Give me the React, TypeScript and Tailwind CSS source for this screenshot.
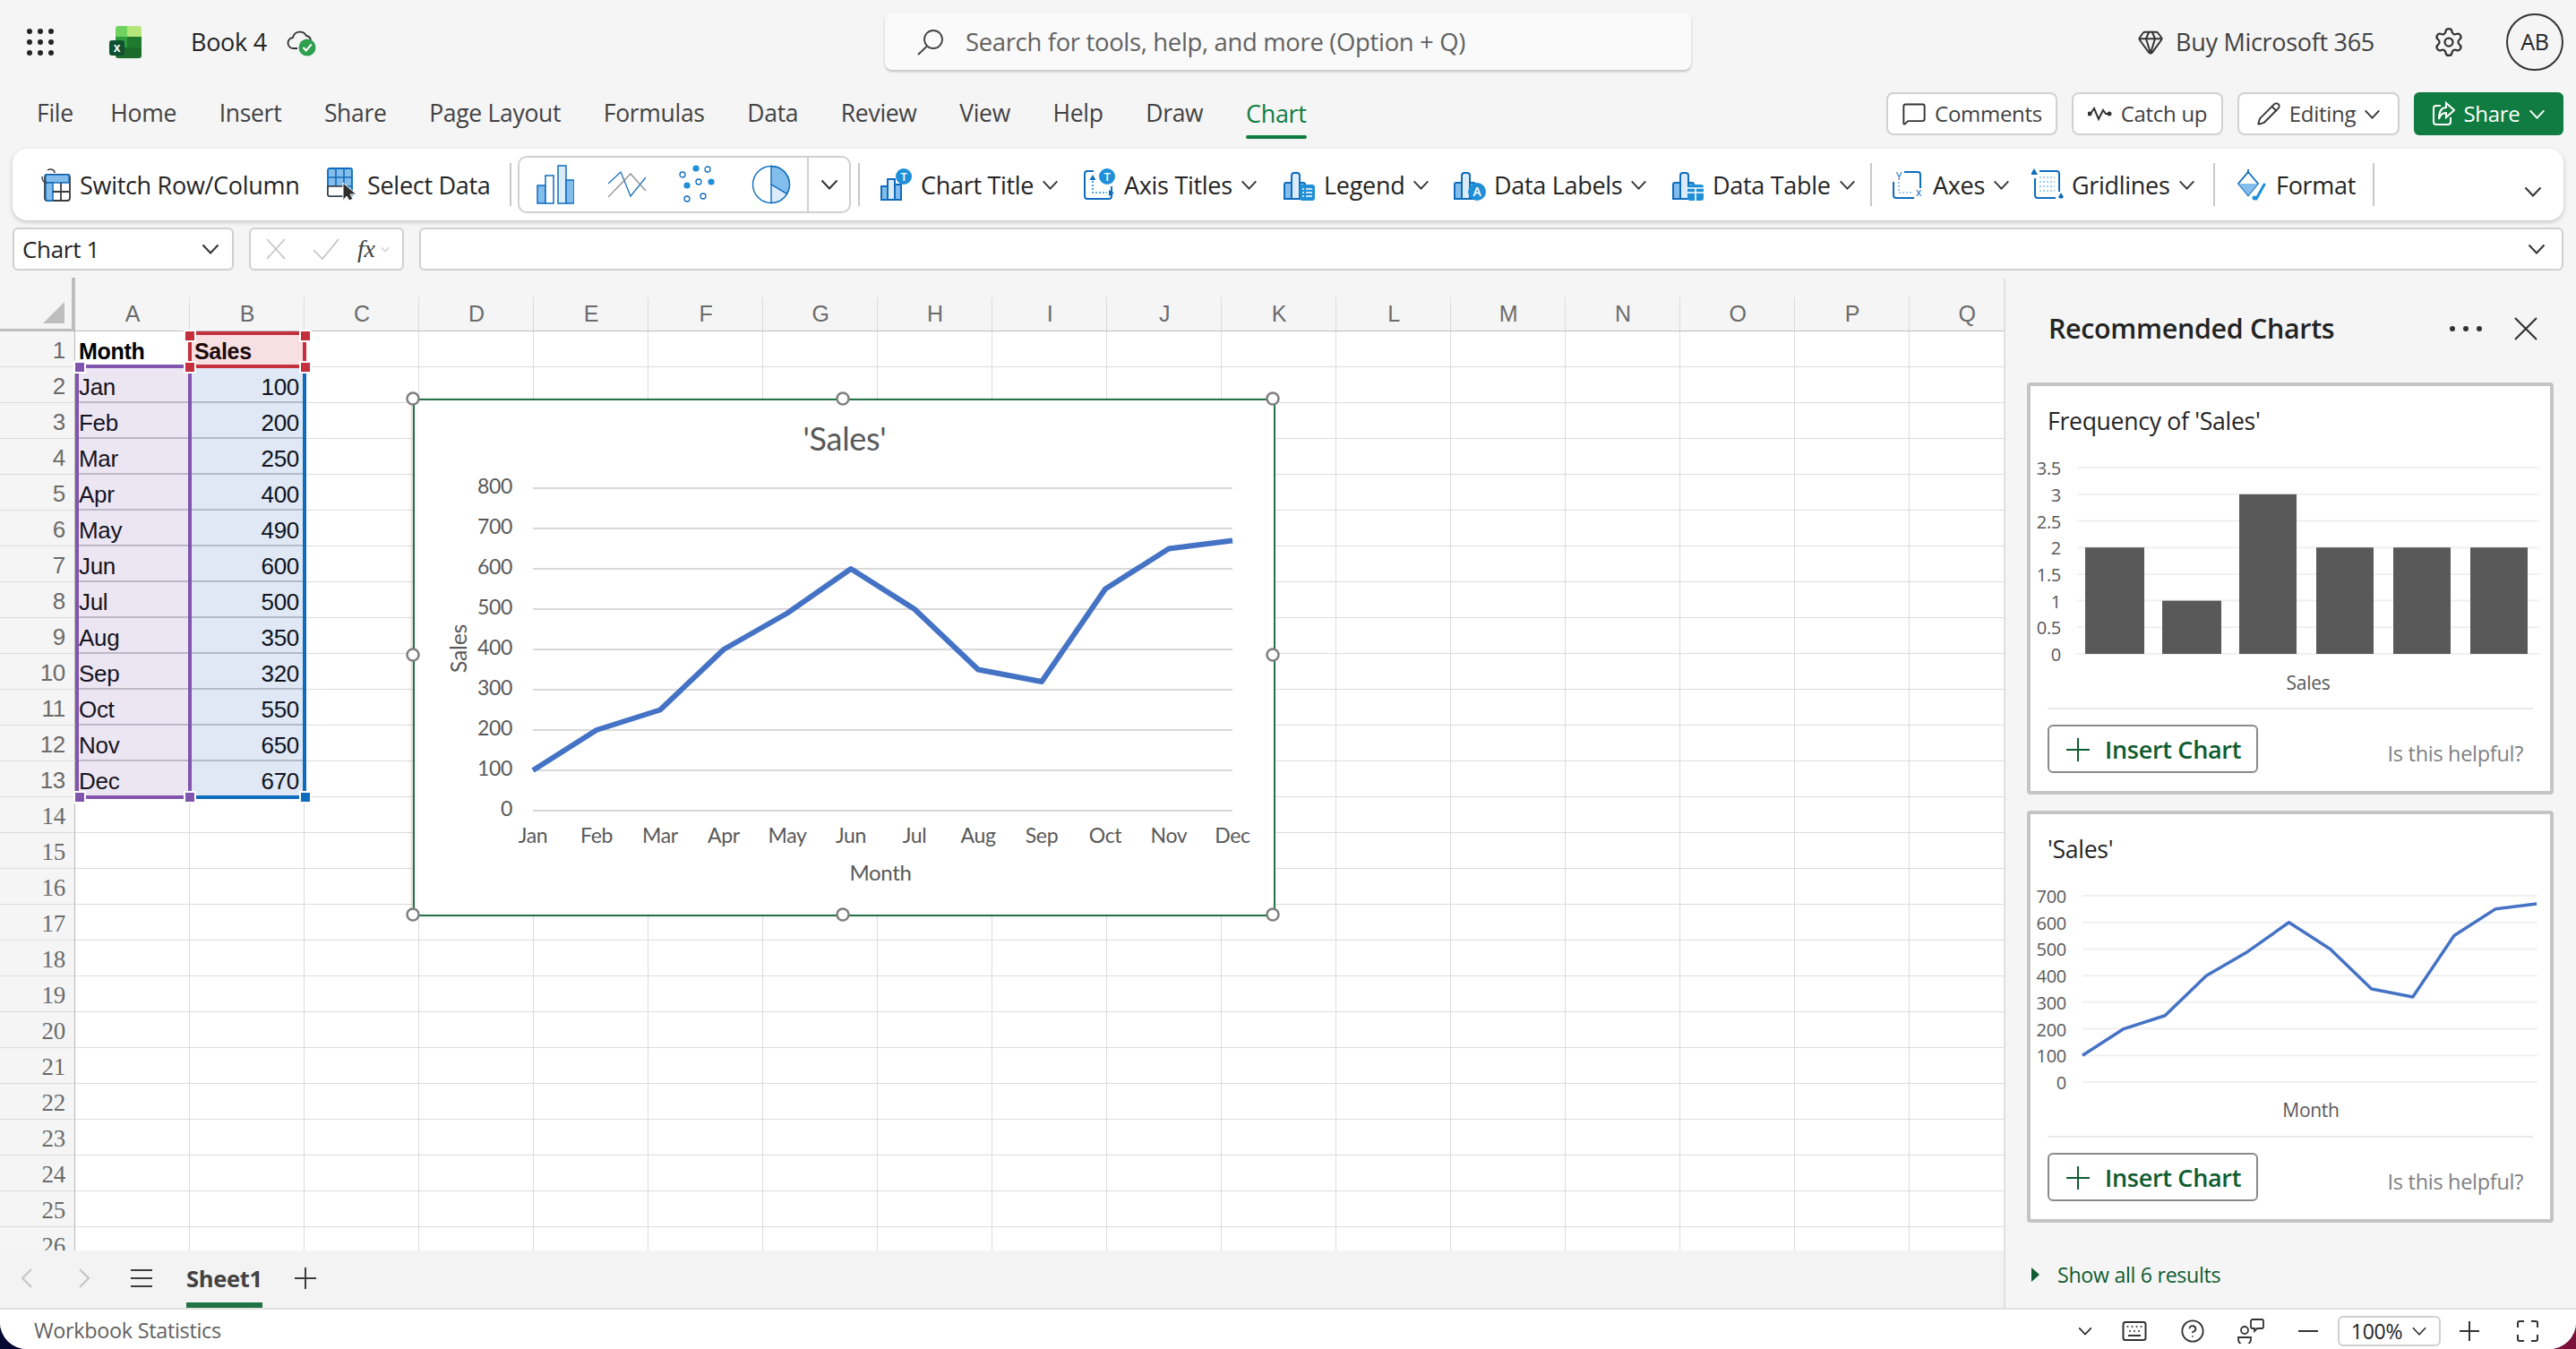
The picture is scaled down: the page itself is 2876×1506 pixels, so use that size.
import { Settings, Gem, Keyboard, CircleHelp, Pencil, MessageSquare } from 'lucide-react'

const months = ['Jan', 'Feb', 'Mar', 'Apr', 'May', 'Jun', 'Jul', 'Aug', 'Sep', 'Oct', 'Nov', 'Dec']
const sales = [100, 200, 250, 400, 490, 600, 500, 350, 320, 550, 650, 670]
const columns = 'ABCDEFGHIJKLMNOPQ'.split('')
const rows = Array.from({ length: 26 }, (_, i) => i + 1)

const DARK = '#0f6cbd'
const MID = '#83bdeb'
const LIGHT = '#dcebf9'
const BADGE = '#1f8fd8'
const GREEN = '#0e5c2f'

function Chev({ className = 'w-[20px] h-[12px]', color = '#333333' }: { className?: string; color?: string }) {
    return (
        <svg viewBox="0 0 20 12" className={className} fill="none">
            <path d="M1.5 1.5 L10 10.5 L18.5 1.5" stroke={color} strokeWidth="2" />
        </svg>
    )
}

function Bars() {
    return (
        <g>
            <path d="M1 34 V18 a2 2 0 0 1 2-2 h6 V34 Z" fill={MID} stroke={DARK} strokeWidth="2" />
            <path d="M9 34 V8 a3 3 0 0 1 3-3 h3 a3 3 0 0 1 3 3 V34 Z" fill={LIGHT} stroke={DARK} strokeWidth="2" />
            <path d="M18 34 V16 h4 a2 2 0 0 1 2 2 V34 Z" fill={MID} stroke={DARK} strokeWidth="2" />
        </g>
    )
}

function ChartTitleIcon() {
    return (
        <svg viewBox="0 0 36 36" className="w-[36px] h-[36px]">
            <path d="M1 35 V20 h7 V35 Z" fill={MID} stroke={DARK} strokeWidth="2" />
            <path d="M8 35 V12 h8 V35 Z" fill={LIGHT} stroke={DARK} strokeWidth="2" />
            <path d="M16 35 V18 h7 V35 Z" fill={MID} stroke={DARK} strokeWidth="2" />
            <circle cx="26" cy="9" r="9" fill={BADGE} />
            <text x="26" y="14" textAnchor="middle" fontSize="13" fontWeight="600" fill="#ffffff">T</text>
        </svg>
    )
}

function LegendIcon() {
    return (
        <svg viewBox="0 0 36 36" className="w-[36px] h-[36px]">
            <Bars />
            <rect x="18" y="18" width="17" height="18" rx="3" fill={BADGE} />
            <path d="M21 23 h2 M25 23 h7 M21 27 h2 M25 27 h7 M21 31 h2 M25 31 h7" stroke="#ffffff" strokeWidth="1.6" />
        </svg>
    )
}

function DataLabelsIcon() {
    return (
        <svg viewBox="0 0 36 36" className="w-[36px] h-[36px]">
            <Bars />
            <circle cx="26" cy="26" r="10" fill={BADGE} />
            <text x="26" y="31" textAnchor="middle" fontSize="14" fontWeight="600" fill="#ffffff">A</text>
        </svg>
    )
}

function DataTableIcon() {
    return (
        <svg viewBox="0 0 36 36" className="w-[36px] h-[36px]">
            <Bars />
            <rect x="17" y="18" width="18" height="18" rx="3" fill={BADGE} />
            <path d="M26 22 V36 M17 27 H35 M17 22 H35" stroke="#ffffff" strokeWidth="1.6" />
        </svg>
    )
}

function AxisTitlesIcon() {
    return (
        <svg viewBox="0 0 36 36" className="w-[36px] h-[36px]" fill="none">
            <path d="M11 3 H4 a3 3 0 0 0 -3 3 V31 a3 3 0 0 0 3 3 H28 a3 3 0 0 0 3-3 V20" stroke={DARK} strokeWidth="2" />
            <path d="M10 14 V27 H26" stroke={BADGE} strokeWidth="1.6" strokeDasharray="2 2" />
            <path d="M10 7 l3.5 6 h-7 Z" fill={DARK} />
            <path d="M28 24 l6 3.5 -6 3.5 Z" fill={DARK} />
            <circle cx="26" cy="9" r="9" fill={BADGE} />
            <text x="26" y="14" textAnchor="middle" fontSize="13" fontWeight="600" fill="#ffffff">T</text>
        </svg>
    )
}

function AxesIcon() {
    return (
        <svg viewBox="0 0 36 36" className="w-[36px] h-[36px]" fill="none">
            <path d="M13 4 H28 a3 3 0 0 1 3 3 V22 M24 33 H4 a3 3 0 0 1 -3-3 V15" stroke={DARK} strokeWidth="2" />
            <path d="M7 15 V27 H23" stroke={MID} strokeWidth="1.6" strokeDasharray="2 2" />
            <text x="7" y="13" textAnchor="middle" fontSize="12" fill={DARK}>Y</text>
            <text x="29" y="31" textAnchor="middle" fontSize="12" fill={DARK}>x</text>
        </svg>
    )
}

function GridlinesIcon() {
    return (
        <svg viewBox="0 0 36 36" className="w-[36px] h-[36px]" fill="none">
            <path d="M9 3 H28 a3 3 0 0 1 3 3 V26 M27 33 H7 a3 3 0 0 1 -3-3 V11" stroke={DARK} strokeWidth="2" />
            <path d="M9 10 H26 M9 15 H26 M9 20 H26 M9 25 H26" stroke={MID} strokeWidth="1.6" strokeDasharray="2 2" />
            <path d="M3 0 l4 7 h-8 Z M33 27 l3 5 a3.5 3.5 0 0 1 -6 0 Z" fill={DARK} />
        </svg>
    )
}

function FormatIcon() {
    return (
        <svg viewBox="0 0 36 36" className="w-[36px] h-[36px]" fill="none">
            <path d="M14 1 V6 M14 4 L25 17 L14 30 L3 17 Z" stroke={DARK} strokeWidth="1.8" />
            <path d="M3 17 H25 L14 30 Z" fill={MID} />
            <path d="M32 18 L23 34" stroke={BADGE} strokeWidth="3" strokeLinecap="round" />
            <circle cx="21" cy="33" r="2.5" fill={BADGE} />
        </svg>
    )
}

function SwitchIcon() {
    return (
        <svg viewBox="0 0 34 38" className="w-[34px] h-[38px]" fill="none">
            <rect x="5" y="8" width="28" height="29" rx="3" fill="#ffffff" stroke="#3a3a3a" strokeWidth="1.8" />
            <path d="M6 8 H32 V17 H6 Z" fill={MID} stroke={DARK} strokeWidth="1.5" />
            <path d="M6 17 H14 V37 H8 a2 2 0 0 1 -2-2 Z" fill={MID} stroke={DARK} strokeWidth="1.5" />
            <path d="M14 27 H32 M23 17 V37" stroke="#3a3a3a" strokeWidth="1.8" />
            <path d="M16 6 C16 2 11 1 8 3 M2 10 C2 14 4 17 7 17" stroke="#3a3a3a" strokeWidth="1.5" />
        </svg>
    )
}

function SelectDataIcon() {
    return (
        <svg viewBox="0 0 36 38" className="w-[36px] h-[38px]" fill="none">
            <rect x="1" y="1" width="27" height="31" rx="2" fill={MID} stroke={DARK} strokeWidth="1.8" />
            <path d="M10 1 V32 M19 1 V32 M1 11 H28 M1 21 H28" stroke={DARK} strokeWidth="1.6" />
            <path d="M1 21 H19 V32 H3 a2 2 0 0 1 -2-2 Z" fill="#ffffff" stroke="#3a3a3a" strokeWidth="1.6" />
            <path d="M18 17 V37 L22 32 L25 37 L29 35 L26 30 H33 Z" fill="#2f2f2f" stroke="#ffffff" strokeWidth="1" />
        </svg>
    )
}

function ColumnChartIcon() {
    return (
        <svg viewBox="0 0 42 44" className="w-[42px] h-[44px]">
            <rect x="1" y="23" width="9" height="20" fill={MID} stroke={DARK} strokeWidth="1.5" />
            <rect x="10" y="12" width="9" height="31" fill="#ffffff" stroke={DARK} strokeWidth="1.5" />
            <rect x="24" y="1" width="9" height="42" fill={LIGHT} stroke={DARK} strokeWidth="1.5" />
            <rect x="33" y="17" width="9" height="26" fill={MID} stroke={DARK} strokeWidth="1.5" />
        </svg>
    )
}

function LineChartIcon() {
    return (
        <svg viewBox="0 0 42 30" className="w-[42px] h-[30px]" fill="none">
            <path d="M0 14 L14 1 L25 28 L42 7" stroke={DARK} strokeWidth="1.2" />
            <path d="M0 29 L25 3 L42 22" stroke="#8a8a8a" strokeWidth="1.2" />
        </svg>
    )
}

function ScatterIcon() {
    const open = [[7, 11], [35, 5], [25, 19], [12, 38], [30, 35]]
    const solid = [[22, 4], [12, 23], [39, 19]]
    return (
        <svg viewBox="0 0 46 44" className="w-[46px] h-[44px]" fill="none">
            {open.map(([x, y]) => (
                <circle key={`${x}-${y}`} cx={x} cy={y} r="3" stroke={DARK} strokeWidth="1.3" fill="#ffffff" />
            ))}
            {solid.map(([x, y]) => (
                <circle key={`${x}-${y}`} cx={x} cy={y} r="3.6" fill={BADGE} />
            ))}
        </svg>
    )
}

function PieIcon() {
    return (
        <svg viewBox="0 0 44 44" className="w-[44px] h-[44px]" fill="none">
            <circle cx="22" cy="22" r="20.5" fill="#ffffff" stroke={DARK} strokeWidth="1.4" />
            <path d="M22 1.5 A20.5 20.5 0 0 1 39.5 32.5 L22 22 Z" fill={MID} stroke={DARK} strokeWidth="1.4" />
            <path d="M22 22 L39.5 32.5 A20.5 20.5 0 0 1 22 42.5 Z" fill={LIGHT} stroke={DARK} strokeWidth="1.4" />
        </svg>
    )
}

function ExcelLogo() {
    return (
        <svg viewBox="0 0 36 36" className="w-[36px] h-[36px]">
            <path d="M7 3 a3 3 0 0 1 3-3 h10 V12 H7 Z" fill="#6fd35f" />
            <path d="M20 0 h13 a3 3 0 0 1 3 3 V12 H20 Z" fill="#b5e77a" />
            <path d="M7 12 H36 V24 H7 Z" fill="#2f9c3f" />
            <path d="M20 12 H36 V24 H20 Z" fill="#1f7a30" />
            <path d="M7 24 H36 V33 a3 3 0 0 1 -3 3 H10 a3 3 0 0 1 -3-3 Z" fill="#1d6b2b" />
            <rect x="0" y="16" width="17" height="17" rx="3" fill="#0e5233" />
            <text x="8.5" y="29" textAnchor="middle" fontSize="14" fontWeight="700" fontFamily="Liberation Sans" fill="#ffffff">x</text>
        </svg>
    )
}

function ShareIcon() {
    return (
        <svg viewBox="0 0 26 28" className="w-[26px] h-[28px]" fill="none" stroke="#ffffff" strokeWidth="2">
            <path d="M10 5 H5 a3 3 0 0 0 -3 3 V23 a3 3 0 0 0 3 3 H18 a3 3 0 0 0 3-3 V18" />
            <path d="M16 2 L25 10 L16 18 V13 C11 13 9 16 8 20 C8 13 10 7 16 7 Z" />
        </svg>
    )
}

function Divider({ className }: { className: string }) {
    return <div className={`shrink-0 w-[2px] h-[48px] bg-[#c8c8c8] ${className}`} />
}

function RibbonButton({ icon, label, width, arrow = true }: { icon: React.ReactNode; label: string; width: string; arrow?: boolean }) {
    return (
        <div className={`flex items-center shrink-0 ${width}`}>
            <span className="flex w-[36px] justify-center">{icon}</span>
            <span className="ml-[9px] pt-[2px] text-[#242424]">{label}</span>
            {arrow && <Chev className="ml-[9px] w-[19px] h-[11px]" />}
        </div>
    )
}

function TopButton({ icon, label, width, arrow }: { icon: React.ReactNode; label: string; width: string; arrow?: boolean }) {
    return (
        <div className={`flex items-center justify-center h-[48px] gap-[9px] bg-white rounded-[8px] border-2 border-[#d1d1d1] text-[#424242] text-[24px] ${width}`}>
            {icon}
            <span>{label}</span>
            {arrow && <Chev className="w-[19px] h-[11px]" />}
        </div>
    )
}

function MainChart() {
    const x = (i: number) => 595 + i * 71
    const y = (v: number) => 905 - v * 0.45
    const points = sales.map((v, i) => `${x(i)},${y(v)}`).join(' ')
    const handles = [[461, 445], [941, 445], [1421, 445], [461, 731], [1421, 731], [461, 1021], [941, 1021], [1421, 1021]]
    return (
        <div className="absolute left-[461px] top-[135px] w-[963px] h-[578px] bg-white border-2 border-[#217346] shadow-[-2px_0_3px_rgba(0,0,0,0.15)]">
            <svg viewBox="463 447 959 574" className="absolute left-0 top-0 w-[959px] h-[574px] overflow-visible font-['Lato',sans-serif]">
                <text x="943" y="503" textAnchor="middle" fontSize="36" fill="#595959">'Sales'</text>
                {[0, 100, 200, 300, 400, 500, 600, 700, 800].map((v) => (
                    <g key={v}>
                        <line x1="595" x2="1376" y1={y(v)} y2={y(v)} stroke="#d9d9d9" strokeWidth="2" />
                        <text x="572" y={y(v) + 6} textAnchor="end" fontSize="23" fill="#595959">{v}</text>
                    </g>
                ))}
                <polyline points={points} fill="none" stroke="#4472c4" strokeWidth="6" strokeLinejoin="round" />
                {months.map((m, i) => (
                    <text key={m} x={x(i)} y="941" textAnchor="middle" fontSize="23" fill="#595959">{m}</text>
                ))}
                <text x="983" y="983" textAnchor="middle" fontSize="24" fill="#595959">Month</text>
                <text transform="translate(521 724) rotate(-90)" textAnchor="middle" fontSize="25" fill="#595959">Sales</text>
                {handles.map(([hx, hy]) => (
                    <circle key={`${hx}-${hy}`} cx={hx} cy={hy} r="6.5" fill="#ffffff" stroke="#7f7f7f" strokeWidth="2.5" />
                ))}
            </svg>
        </div>
    )
}

function RangeHandle({ className }: { className: string }) {
    return <div className={`absolute w-[10px] h-[10px] outline-2 outline-white ${className}`} />
}

function SheetGrid() {
    return (
        <div className="relative flex-1 overflow-hidden bg-white font-['Liberation_Sans',sans-serif]">
            <div className="flex h-[60px] bg-[#f5f5f5] border-b border-[#bdbdbd]">
                <div className="flex justify-end items-end shrink-0 w-[84px] pr-[8px] pb-[6px] border-r-4 border-b-2 border-[#bdbdbd]">
                    <svg viewBox="0 0 24 24" className="w-[24px] h-[24px]"><polygon points="24,0 24,24 0,24" fill="#bdbdbd" /></svg>
                </div>
                {columns.map((c) => (
                    <div key={c} className="relative shrink-0 flex items-end justify-center w-[128px] text-[25px] text-[#6b6b6b]">
                        {c}
                        <div className="absolute right-0 top-[22px] bottom-0 w-px bg-[#dcdcdc]" />
                    </div>
                ))}
            </div>
            {rows.map((r) => (
                <div key={r} className="flex h-[40px]">
                    <div className={`shrink-0 flex items-center justify-end w-[84px] pr-[10px] pt-[4px] bg-[#f5f5f5] border-b border-r border-b-[#dcdcdc] border-r-[#b8b8b8] text-[#6b6b6b] ${r > 13 ? "font-['Liberation_Serif',serif] text-[27px]" : 'text-[26px]'}`}>
                        {r}
                    </div>
                    {columns.map((c) => {
                        const month = r >= 2 && r <= 13 ? months[r - 2] : null
                        if (c === 'A' && r === 1) {
                            return <div key={c} className="shrink-0 flex items-center w-[128px] pl-[4px] pt-[6px] border-r border-b border-[#dcdcdc] font-bold text-[25px] text-black">Month</div>
                        }
                        if (c === 'B' && r === 1) {
                            return <div key={c} className="shrink-0 flex items-center w-[128px] pl-[5px] pt-[6px] bg-[#f8e0e2] font-bold text-[25px] text-[#1c0a0c]">Sales</div>
                        }
                        if (c === 'A' && month) {
                            return <div key={c} className="shrink-0 flex items-center w-[128px] pl-[4px] pt-[6px] bg-[#ece6f2] border-b-2 border-[#bcb8c8] text-[26px] text-[#161320]">{month}</div>
                        }
                        if (c === 'B' && month) {
                            return <div key={c} className="shrink-0 flex items-center justify-end w-[128px] pr-[6px] pt-[6px] bg-[#dfe8f4] border-b-2 border-[#b4bbc8] text-[26px] text-[#10131c]">{sales[r - 2]}</div>
                        }
                        return <div key={c} className="shrink-0 w-[128px] border-r border-b border-[#dcdcdc]" />
                    })}
                </div>
            ))}

            <div className="absolute left-[84px] top-[97px] w-[130px] h-[485px] border-4 border-[#7f55ad]" />
            <div className="absolute left-[214px] top-[106px] w-[128px] h-[476px] border-r-4 border-b-4 border-[#0f6cbd]" />
            <div className="absolute left-[210px] top-[60px] w-[132px] h-[41px] border-4 border-[#c4313c]" />
            <RangeHandle className="left-[207px] top-[60px] h-[5px] bg-[#c4313c]" />
            <RangeHandle className="left-[336px] top-[60px] h-[5px] bg-[#c4313c]" />
            <RangeHandle className="left-[207px] top-[95px] bg-[#c4313c]" />
            <RangeHandle className="left-[336px] top-[95px] bg-[#c4313c]" />
            <RangeHandle className="left-[84px] top-[95px] w-[5px] bg-[#7f55ad]" />
            <RangeHandle className="left-[84px] top-[575px] w-[5px] bg-[#7f55ad]" />
            <RangeHandle className="left-[207px] top-[575px] bg-[#7f55ad]" />
            <RangeHandle className="left-[336px] top-[575px] bg-[#0f6cbd]" />
            <MainChart />
        </div>
    )
}

function CardFooter() {
    return (
        <>
            <div className="h-[2px] mx-[19px] mt-[10px] bg-[#e8e8e8]" />
            <div className="flex items-end justify-between pl-[19px] pr-[30px] mt-[17px]">
                <div className="flex items-center h-[54px] w-[235px] pl-[19px] pt-[2px] border-2 border-[#8a8a8a] rounded-[6px]">
                    <svg viewBox="0 0 26 26" className="w-[26px] h-[26px]"><path d="M13 0 V26 M0 13 H26" stroke={GREEN} strokeWidth="2" /></svg>
                    <span className="ml-[17px] font-semibold text-[27px] text-[#0e5c2f]">Insert Chart</span>
                </div>
                <span className="pb-[4px] text-[23.5px] text-[#808080]">Is this helpful?</span>
            </div>
        </>
    )
}

function FrequencyCard() {
    const y = (v: number) => 730 - v * 59.4
    const bars = [
        { x: 2328, w: 66, v: 2 },
        { x: 2414, w: 66, v: 1 },
        { x: 2500, w: 64, v: 3 },
        { x: 2586, w: 64, v: 2 },
        { x: 2672, w: 64, v: 2 },
        { x: 2758, w: 64, v: 2 },
    ]
    return (
        <div className="w-[588px] h-[460px] bg-white border-4 border-[#c4c4c4] rounded-[4px]">
            <div className="h-[64px] pl-[19px] pt-[23px] text-[26.6px] leading-[32px] text-[#242424]">Frequency of 'Sales'</div>
            <svg viewBox="2267 495 580 285" className="block w-[580px] h-[285px]">
                {[0, 0.5, 1, 1.5, 2, 2.5, 3, 3.5].map((v) => (
                    <g key={v}>
                        <line x1="2319" x2="2835" y1={y(v)} y2={y(v)} stroke="#f0f0f0" strokeWidth="2" />
                        <text x="2301" y={y(v) + 8} textAnchor="end" fontSize="20" fill="#595959">{v}</text>
                    </g>
                ))}
                {bars.map((b) => (
                    <rect key={b.x} x={b.x} y={y(b.v)} width={b.w} height={b.v * 59.4} fill="#595959" />
                ))}
                <text x="2577" y="770" textAnchor="middle" fontSize="21" fill="#595959">Sales</text>
            </svg>
            <CardFooter />
        </div>
    )
}

function SalesCard() {
    const x = (i: number) => 2325 + i * 46.1
    const y = (v: number) => 1208 - v * (208 / 700)
    const points = sales.map((v, i) => `${x(i)},${y(v)}`).join(' ')
    return (
        <div className="w-[588px] h-[460px] mt-[18px] bg-white border-4 border-[#c4c4c4] rounded-[4px]">
            <div className="h-[64px] pl-[19px] pt-[23px] text-[26.6px] leading-[32px] text-[#242424]">'Sales'</div>
            <svg viewBox="2267 973 580 285" className="block w-[580px] h-[285px]">
                {[0, 100, 200, 300, 400, 500, 600, 700].map((v) => (
                    <g key={v}>
                        <line x1="2325" x2="2833" y1={y(v)} y2={y(v)} stroke="#f0f0f0" strokeWidth="2" />
                        <text x="2307" y={y(v) + 8} textAnchor="end" fontSize="20" fill="#595959">{v}</text>
                    </g>
                ))}
                <polyline points={points} fill="none" stroke="#4472c4" strokeWidth="3.5" strokeLinejoin="round" />
                <text x="2580" y="1247" textAnchor="middle" fontSize="21" fill="#595959">Month</text>
            </svg>
            <CardFooter />
        </div>
    )
}

export default function App() {
    return (
        <div className="w-[2876px] h-[1506px] overflow-hidden bg-gradient-to-r from-[#070733] to-[#7a1038] font-['Open_Sans',sans-serif] tracking-[-0.3px]">
            <div className="flex flex-col h-[1506px] bg-[#f5f5f5] rounded-b-[30px] overflow-hidden">
                {/* title bar */}
                <div className="relative flex items-center shrink-0 h-[94px] pl-[30px] pr-[14px]">
                    <div className="grid grid-cols-3 gap-x-[6px] gap-y-[6px] w-[30px]">
                        {Array.from({ length: 9 }, (_, i) => (
                            <span key={i} className="w-[6px] h-[6px] rounded-full bg-[#242424]" />
                        ))}
                    </div>
                    <div className="ml-[62px]"><ExcelLogo /></div>
                    <span className="ml-[55px] text-[27px] text-[#242424]">Book 4</span>
                    <svg viewBox="0 0 34 34" className="ml-[22px] w-[34px] h-[34px]" fill="none">
                        <path d="M12 24 H8 a6 6 0 0 1 -1-12 a8 8 0 0 1 15-2 a6 6 0 0 1 5 5" stroke="#333333" strokeWidth="1.8" />
                        <circle cx="23" cy="23" r="9.5" fill="#2e9e4f" />
                        <path d="M18.5 23 l3.2 3.5 l6-7" stroke="#ffffff" strokeWidth="2" />
                    </svg>
                    <div className="absolute left-[988px] top-[14px] flex items-center w-[900px] h-[64px] pl-[36px] pt-[2px] bg-[#fafafa] rounded-[8px] shadow-[0_2px_3px_rgba(0,0,0,0.22)]">
                        <svg viewBox="0 0 30 30" className="w-[30px] h-[30px]" fill="none" stroke="#424242" strokeWidth="1.8">
                            <circle cx="18" cy="12" r="10" />
                            <path d="M11 19.5 L1 29" />
                        </svg>
                        <span className="ml-[24px] text-[27.4px] text-[#616161]">Search for tools, help, and more (Option + Q)</span>
                    </div>
                    <div className="ml-auto flex items-center">
                        <Gem size={30} strokeWidth={1.6} color="#333333" />
                        <span className="ml-[13px] text-[27px] text-[#424242]">Buy Microsoft 365</span>
                        <Settings size={36} strokeWidth={1.5} color="#333333" className="ml-[65px]" />
                        <div className="flex items-center justify-center ml-[46px] w-[64px] h-[64px] rounded-full border-2 border-[#333333] text-[25px] text-[#242424]">AB</div>
                    </div>
                </div>

                {/* tabs */}
                <div className="relative flex items-center shrink-0 h-[66px] text-[26.5px] text-[#424242]">
                    <div className="flex gap-[47.6px] pl-[41px]">
                        <span className="mr-[-6px]">File</span>
                        {['Home', 'Insert', 'Share', 'Page Layout', 'Formulas', 'Data', 'Review', 'View', 'Help', 'Draw'].map((t) => (
                            <span key={t}>{t}</span>
                        ))}
                        <span className="relative font-medium text-[27px] text-[#107c41]">
                            Chart
                            <span className="absolute left-0 right-0 bottom-[-8px] h-[4px] rounded-full bg-[#107c41]" />
                        </span>
                    </div>
                    <div className="ml-auto flex gap-[16px] pr-[14px]">
                        <TopButton width="w-[191px]" label="Comments" icon={<MessageSquare size={28} strokeWidth={1.6} color="#333333" />} />
                        <TopButton width="w-[169px]" label="Catch up" icon={
                            <svg viewBox="0 0 28 16" className="w-[28px] h-[16px]" fill="none" stroke="#333333" strokeWidth="2">
                                <path d="M1 8 h2 L7 2 L12 14 L17 4 L20 8 h2" />
                                <circle cx="2" cy="8" r="1.5" fill="#333333" />
                                <circle cx="24" cy="8" r="1.5" fill="#333333" />
                            </svg>
                        } />
                        <TopButton width="w-[181px]" label="Editing" arrow icon={<Pencil size={28} strokeWidth={1.6} color="#333333" />} />
                        <div className="flex items-center justify-center gap-[9px] w-[167px] h-[48px] rounded-[6px] bg-[#107c41] text-[24px] text-white">
                            <ShareIcon />
                            <span>Share</span>
                            <Chev className="w-[19px] h-[11px]" color="#ffffff" />
                        </div>
                    </div>
                </div>

                {/* ribbon */}
                <div className="flex items-center shrink-0 h-[80px] mt-[6px] mx-[14px] pl-[30px] bg-white rounded-[16px] shadow-[0_2px_5px_rgba(0,0,0,0.2)] text-[27px]">
                    <RibbonButton width="w-[321px]" arrow={false} label="Switch Row/Column" icon={<SwitchIcon />} />
                    <RibbonButton width="w-[204px]" arrow={false} label="Select Data" icon={<SelectDataIcon />} />
                    <Divider className="mr-[7px]" />
                    <div className="flex items-center shrink-0 w-[372px] h-[64px] border-2 border-[#d0d0d0] rounded-[10px]">
                        <span className="ml-[19px]"><ColumnChartIcon /></span>
                        <span className="ml-[38px]"><LineChartIcon /></span>
                        <span className="ml-[34px]"><ScatterIcon /></span>
                        <span className="ml-[38px]"><PieIcon /></span>
                        <div className="flex items-center justify-center ml-[18px] w-[49px] h-full border-l-2 border-[#d0d0d0]">
                            <Chev />
                        </div>
                    </div>
                    <Divider className="ml-[8px] mr-[23px]" />
                    <RibbonButton width="w-[227px]" label="Chart Title" icon={<ChartTitleIcon />} />
                    <RibbonButton width="w-[223px]" label="Axis Titles" icon={<AxisTitlesIcon />} />
                    <RibbonButton width="w-[190px]" label="Legend" icon={<LegendIcon />} />
                    <RibbonButton width="w-[244px]" label="Data Labels" icon={<DataLabelsIcon />} />
                    <RibbonButton width="w-[221px]" label="Data Table" icon={<DataTableIcon />} />
                    <Divider className="mr-[23px]" />
                    <RibbonButton width="w-[155px]" label="Axes" icon={<AxesIcon />} />
                    <RibbonButton width="w-[203px]" label="Gridlines" icon={<GridlinesIcon />} />
                    <Divider className="mr-[23px]" />
                    <RibbonButton width="w-[153px]" arrow={false} label="Format" icon={<FormatIcon />} />
                    <Divider className="" />
                    <Chev className="ml-auto mr-[24px] mt-[16px] w-[20px] h-[12px]" />
                </div>

                {/* formula bar */}
                <div className="flex shrink-0 h-[48px] mt-[8px] mx-[14px] gap-[17px] text-[26px]">
                    <div className="flex items-center justify-between w-[247px] pl-[9px] pr-[14px] bg-white border-2 border-[#d0d0d0] rounded-[6px] text-[#242424]">
                        Chart 1
                        <Chev />
                    </div>
                    <div className="flex items-center w-[173px] pl-[16px] bg-white border-2 border-[#d0d0d0] rounded-[6px]">
                        <svg viewBox="0 0 24 24" className="w-[24px] h-[24px]" fill="none" stroke="#c2c2c2" strokeWidth="1.6"><path d="M2 1 L22 23 M22 1 L2 23" /></svg>
                        <svg viewBox="0 0 30 24" className="ml-[29px] w-[30px] h-[24px]" fill="none" stroke="#c2c2c2" strokeWidth="1.6"><path d="M1 13 L11 23 L29 1" /></svg>
                        <span className="ml-[20px] font-['Liberation_Serif',serif] italic text-[28px] text-[#424242]">fx</span>
                        <Chev className="ml-[6px] w-[10px] h-[7px]" color="#a0a0a0" />
                    </div>
                    <div className="flex flex-1 items-center justify-end pr-[18px] bg-white border-2 border-[#d0d0d0] rounded-[6px]">
                        <Chev />
                    </div>
                </div>

                {/* sheet + side panel */}
                <div className="flex flex-1 min-h-0 mt-[8px]">
                    <div className="flex flex-col flex-1 min-w-0">
                        <SheetGrid />
                        <div className="flex items-center shrink-0 h-[64px] pb-[2px] bg-[#f3f3f3]">
                            <svg viewBox="0 0 12 22" className="ml-[24px] w-[12px] h-[22px]" fill="none" stroke="#c4c4c4" strokeWidth="2"><path d="M11 1 L1 11 L11 21" /></svg>
                            <svg viewBox="0 0 12 22" className="ml-[52px] w-[12px] h-[22px]" fill="none" stroke="#c4c4c4" strokeWidth="2"><path d="M1 1 L11 11 L1 21" /></svg>
                            <svg viewBox="0 0 24 20" className="ml-[46px] w-[24px] h-[20px]" fill="none" stroke="#3d3d3d" strokeWidth="2"><path d="M0 1 H24 M0 10 H24 M0 19 H24" /></svg>
                            <div className="relative flex items-center ml-[38px] h-full font-bold text-[25.5px] text-[#424242]">
                                Sheet1
                                <span className="absolute left-0 right-0 bottom-[-2px] h-[6px] bg-[#217346]" />
                            </div>
                            <svg viewBox="0 0 24 24" className="ml-[36px] w-[24px] h-[24px]" fill="none" stroke="#3d3d3d" strokeWidth="2"><path d="M12 0 V24 M0 12 H24" /></svg>
                        </div>
                    </div>
                    <div className="flex flex-col shrink-0 w-[639px] pl-[24px] bg-[#f5f5f5] border-l-2 border-[#e0e0e0]">
                        <div className="flex items-center shrink-0 h-[117px] pl-[24px] pr-[43px] pb-[4px]">
                            <span className="font-semibold text-[30.4px] text-[#242424]">Recommended Charts</span>
                            <span className="flex gap-[9px] ml-auto">
                                <span className="w-[6px] h-[6px] rounded-full bg-[#333333]" />
                                <span className="w-[6px] h-[6px] rounded-full bg-[#333333]" />
                                <span className="w-[6px] h-[6px] rounded-full bg-[#333333]" />
                            </span>
                            <svg viewBox="0 0 26 26" className="ml-[36px] w-[26px] h-[26px]" fill="none" stroke="#333333" strokeWidth="2.2"><path d="M1 1 L25 25 M25 1 L1 25" /></svg>
                        </div>
                        <FrequencyCard />
                        <SalesCard />
                        <div className="flex items-center mt-[41px] text-[23.2px] text-[#0e5c2f]">
                            <svg viewBox="0 0 9 16" className="ml-[5px] w-[9px] h-[16px]"><path d="M0 0 L9 8 L0 16 Z" fill="#0e5c2f" /></svg>
                            <span className="ml-[20px]">Show all 6 results</span>
                        </div>
                    </div>
                </div>

                {/* status bar */}
                <div className="flex items-center shrink-0 h-[46px] pl-[38px] pt-[4px] bg-white border-t-2 border-[#e0e0e0] text-[23.4px] text-[#616161]">
                    <span>Workbook Statistics</span>
                    <div className="ml-auto flex items-center pr-[42px]">
                        <Chev className="w-[16px] h-[10px]" color="#242424" />
                        <Keyboard size={30} strokeWidth={1.6} color="#333333" className="ml-[32px]" />
                        <CircleHelp size={28} strokeWidth={1.6} color="#333333" className="ml-[36px]" />
                        <svg viewBox="0 0 30 28" className="ml-[36px] w-[30px] h-[28px]" fill="none" stroke="#333333" strokeWidth="1.8">
                            <circle cx="8" cy="13" r="4" />
                            <path d="M1 21 h14 v2 a5 5 0 0 1 -14 0 Z" />
                            <path d="M17 1 h10 a2 2 0 0 1 2 2 v6 a2 2 0 0 1 -2 2 h-5 l-3 3 v-3 h-2 a2 2 0 0 1 -2-2 v-6 a2 2 0 0 1 2-2 Z" />
                        </svg>
                        <svg viewBox="0 0 22 2" className="ml-[38px] w-[22px] h-[2px]"><rect width="22" height="2" fill="#333333" /></svg>
                        <div className="flex items-center justify-center gap-[10px] ml-[22px] w-[115px] h-[34px] border-2 border-[#d0d0d0] rounded-[6px] text-[23px] text-[#242424]">
                            100%
                            <Chev className="w-[18px] h-[10px]" />
                        </div>
                        <svg viewBox="0 0 22 22" className="ml-[21px] w-[22px] h-[22px]" fill="none" stroke="#333333" strokeWidth="2"><path d="M11 0 V22 M0 11 H22" /></svg>
                        <svg viewBox="0 0 24 24" className="ml-[42px] w-[24px] h-[24px]" fill="none" stroke="#333333" strokeWidth="2"><path d="M8 1 H3 a2 2 0 0 0 -2 2 V8 M16 1 H21 a2 2 0 0 1 2 2 V8 M8 23 H3 a2 2 0 0 1 -2-2 V16 M16 23 H21 a2 2 0 0 0 2-2 V16" /></svg>
                    </div>
                </div>
            </div>
        </div>
    )
}
